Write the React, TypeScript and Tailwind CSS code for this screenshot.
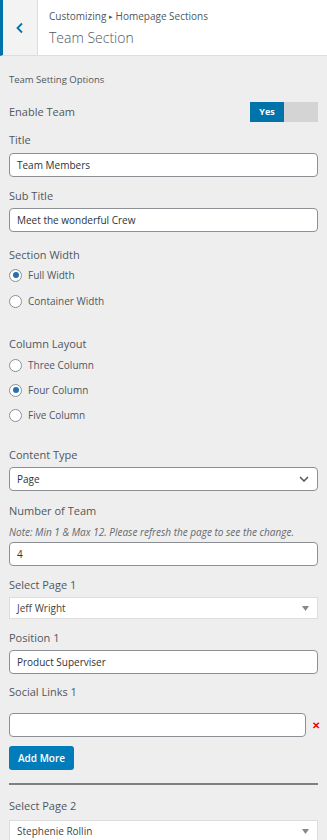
import React from "react";

const font = { fontFamily: '"Open Sans", "Noto Sans", sans-serif' };

function Label({ children, className = "" }: { children: React.ReactNode; className?: string }) {
  return <div className={`text-[11px] leading-[16px] text-[#50575e] ${className}`}>{children}</div>;
}

function TextInput({ value }: { value: string }) {
  return (
    <div className="h-[24px] w-full rounded-[4px] border border-[#8c8f94] bg-white px-[7px] flex items-center text-[10px] text-[#2c3338]">
      {value}
    </div>
  );
}

function Radio({ checked, label }: { checked?: boolean; label: string }) {
  return (
    <div className="flex items-center gap-[6px] h-[16px]">
      <span className="w-[13px] h-[13px] rounded-full border border-[#8c8f94] bg-white flex items-center justify-center">
        {checked && <span className="w-[6px] h-[6px] rounded-full bg-[#2271b1]" />}
      </span>
      <span className="text-[10px] text-[#50575e]">{label}</span>
    </div>
  );
}

function Select2({ value }: { value: string }) {
  return (
    <div className="h-[22px] w-full border border-[#ddd] bg-white pl-[7px] pr-[8px] flex items-center justify-between text-[10px] text-[#444]">
      <span>{value}</span>
      <svg width="7" height="5" viewBox="0 0 7 5"><path d="M0 0h7L3.5 5z" fill="#888" /></svg>
    </div>
  );
}

export default function App() {
  return (
    <div style={font} className="w-[327px] h-[840px] overflow-hidden bg-[#eeeeee]">
      <div className="flex h-[56px]">
        <div className="w-[37px] border-l-[3px] border-[#0073aa] bg-[#f3f3f3] flex items-center justify-center border-b border-b-[#dddddd]">
          <svg width="10" height="12" viewBox="0 0 10 12"><path d="M7 1.5L2.5 6 7 10.5" fill="none" stroke="#0073aa" strokeWidth="1.8" /></svg>
        </div>
        <div className="flex-1 bg-white border-l border-[#dddddd] border-b border-b-[#dddddd] pl-[11px] pt-[9px]">
          <div className="text-[10px] leading-[14px] text-[#50575e]">Customizing <span className="text-[7px] relative -top-[1px]">▸</span> Homepage Sections</div>
          <div className="text-[14px] font-light leading-[22px] text-[#50575e] mt-[2px]">Team Section</div>
        </div>
      </div>

      <div className="px-[9px]">
        <div className="text-[9.5px] text-[#50575e] mt-[18px] leading-[12px]">Team Setting Options</div>

        <div className="flex items-center justify-between mt-[16px]">
          <Label>Enable Team</Label>
          <div className="flex h-[20px]">
            <div className="w-[34px] bg-[#0073aa] text-white text-[9px] font-bold flex items-center justify-center">Yes</div>
            <div className="w-[34px] bg-[#d4d4d4]" />
          </div>
        </div>

        <Label className="mt-[10px]">Title</Label>
        <div className="mt-[5px]"><TextInput value="Team Members" /></div>

        <Label className="mt-[11px]">Sub Title</Label>
        <div className="mt-[4px]"><TextInput value="Meet the wonderful Crew" /></div>

        <Label className="mt-[15px]">Section Width</Label>
        <div className="mt-[4px] flex flex-col gap-[10px]">
          <Radio checked label="Full Width" />
          <Radio label="Container Width" />
        </div>

        <Label className="mt-[27px]">Column Layout</Label>
        <div className="mt-[5px] flex flex-col gap-[9px]">
          <Radio label="Three Column" />
          <Radio checked label="Four Column" />
          <Radio label="Five Column" />
        </div>

        <Label className="mt-[24px]">Content Type</Label>
        <div className="mt-[4px] h-[24px] w-full rounded-[4px] border border-[#8c8f94] bg-white pl-[7px] pr-[8px] flex items-center justify-between text-[10px] text-[#2c3338]">
          <span>Page</span>
          <svg width="10" height="6" viewBox="0 0 10 6"><path d="M1 1l4 4 4-4" fill="none" stroke="#50575e" strokeWidth="1.5" /></svg>
        </div>

        <Label className="mt-[12px]">Number of Team</Label>
        <div className="mt-[7px] text-[10px] italic text-[#646970] leading-[12px] whitespace-nowrap">Note: Min 1 &amp; Max 12. Please refresh the page to see the change.</div>
        <div className="mt-[4px]"><TextInput value="4" /></div>

        <Label className="mt-[11px]">Select Page 1</Label>
        <div className="mt-[4px]"><Select2 value="Jeff Wright" /></div>

        <Label className="mt-[11px]">Position 1</Label>
        <div className="mt-[4px]"><TextInput value="Product Superviser" /></div>

        <Label className="mt-[10px]">Social Links 1</Label>
        <div className="mt-[13px] flex items-center">
          <div className="flex-1"><TextInput value="" /></div>
          <span className="w-[12px] pl-[6px] text-[#e00] text-[10px] font-bold leading-none">✕</span>
        </div>

        <button className="mt-[9px] h-[24px] px-[9px] rounded-[3px] bg-[#007cba] text-white text-[10px] font-semibold">Add More</button>

        <div className="mt-[13px] h-[2px] bg-[#7d7f82]" />

        <Label className="mt-[13px]">Select Page 2</Label>
        <div className="mt-[6px]"><Select2 value="Stephenie Rollin" /></div>
      </div>
    </div>
  );
}
